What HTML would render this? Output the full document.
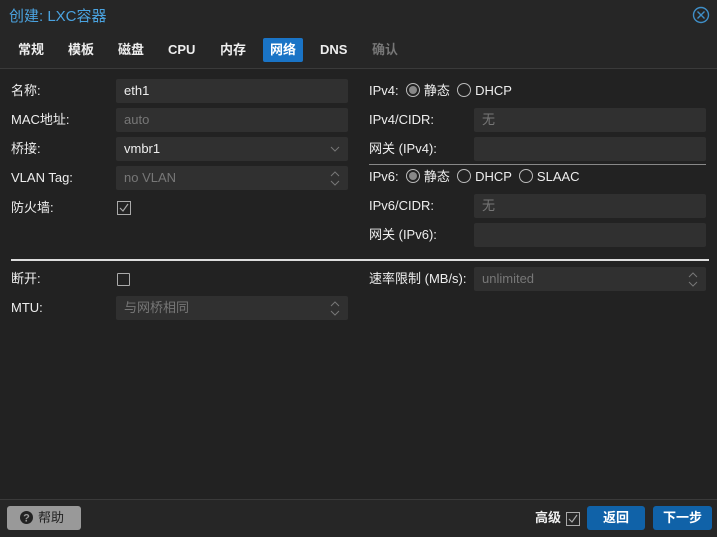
<!DOCTYPE html><html><head><meta charset="utf-8"><style>
*{margin:0;padding:0;box-sizing:border-box}
body{width:717px;height:537px;background:#262626;font-family:"Liberation Sans","Noto Sans CJK SC",sans-serif;font-size:13px;color:#e8e8e8;position:relative;overflow:hidden}
.a{position:absolute;white-space:nowrap}
.t{top:38px;height:24px;line-height:24px;font-weight:bold;color:#eee}
.in{position:absolute;height:24px;background:#303030;border-radius:2px;line-height:24px;padding-left:8px;color:#777}
.in.w{color:#eee}
.lb{position:absolute;line-height:24px;color:#eee}
.cb{position:absolute;width:13px;height:13px;border:1px solid #aaa;border-radius:1px}
.rd{display:inline-block;width:14px;height:14px;border:1px solid #bbb;border-radius:50%;vertical-align:-2px;margin-right:4px;position:relative}
.rd.on::after{content:"";position:absolute;left:2px;top:2px;width:8px;height:8px;border-radius:50%;background:#888}
.arr{position:absolute;right:8px;top:5px}
</style></head><body>
<div class="a" style="left:9px;top:5px;font-size:15px;color:#4aa3e0">创建: LXC容器</div>
<svg class="a" style="left:692px;top:6px" width="18" height="18"><circle cx="9" cy="9" r="7.5" fill="none" stroke="#3f8fc8" stroke-width="1.4"/><path d="M5.5 5.5L12.5 12.5M12.5 5.5L5.5 12.5" stroke="#3f8fc8" stroke-width="1.4"/></svg>
<div class="a t" style="left:18px">常规</div>
<div class="a t" style="left:68px">模板</div>
<div class="a t" style="left:118px">磁盘</div>
<div class="a t" style="left:168px">CPU</div>
<div class="a t" style="left:220px">内存</div>
<div class="a t" style="left:263px;width:40px;text-align:center;background:#1a74c6;border-radius:2px;color:#fff">网络</div>
<div class="a t" style="left:320px">DNS</div>
<div class="a t" style="left:372px;color:#777">确认</div>
<div class="a" style="left:0;top:68px;width:717px;height:432px;background:#222;border-top:1px solid #3a3a3a;border-bottom:1px solid #3a3a3a"></div>

<div class="lb" style="left:11px;top:79px">名称:</div><div class="in w" style="left:116px;top:79px;width:232px">eth1</div>
<div class="lb" style="left:11px;top:108px">MAC地址:</div><div class="in" style="left:116px;top:108px;width:232px">auto</div>
<div class="lb" style="left:11px;top:137px">桥接:</div><div class="in w" style="left:116px;top:137px;width:232px">vmbr1<svg class="arr" style="top:9px" width="10" height="6"><path d="M1 1L5 5L9 1" fill="none" stroke="#777"/></svg></div>
<div class="lb" style="left:11px;top:166px">VLAN Tag:</div><div class="in" style="left:116px;top:166px;width:232px">no VLAN<svg class="arr" width="10" height="15"><path d="M1 5L5 1L9 5M1 10L5 14L9 10" fill="none" stroke="#777"/></svg></div>
<div class="lb" style="left:11px;top:196px">防火墙:</div><svg class="a" style="left:117px;top:201px" width="14" height="14"><rect x="0.5" y="0.5" width="13" height="13" fill="none" stroke="#aaa"/><path d="M3 7L6 10L11 3" fill="none" stroke="#aaa" stroke-width="1.2"/></svg>
<div class="a" style="left:11px;top:259px;width:698px;height:2px;background:#ddd"></div>
<div class="lb" style="left:11px;top:267px">断开:</div><div class="cb" style="left:117px;top:273px"></div>
<div class="lb" style="left:11px;top:296px">MTU:</div><div class="in" style="left:116px;top:296px;width:232px">与网桥相同<svg class="arr" width="10" height="15"><path d="M1 5L5 1L9 5M1 10L5 14L9 10" fill="none" stroke="#777"/></svg></div>

<div class="lb" style="left:369px;top:79px">IPv4: &nbsp;<span class="rd on"></span>静态 &nbsp;<span class="rd"></span>DHCP</div>
<div class="lb" style="left:369px;top:108px">IPv4/CIDR:</div><div class="in" style="left:474px;top:108px;width:232px">无</div>
<div class="lb" style="left:369px;top:137px">网关 (IPv4):</div><div class="in" style="left:474px;top:137px;width:232px"></div>
<div class="a" style="left:369px;top:164px;width:337px;height:1px;background:#888"></div>
<div class="lb" style="left:369px;top:165px">IPv6: &nbsp;<span class="rd on"></span>静态 &nbsp;<span class="rd"></span>DHCP &nbsp;<span class="rd"></span>SLAAC</div>
<div class="lb" style="left:369px;top:194px">IPv6/CIDR:</div><div class="in" style="left:474px;top:194px;width:232px">无</div>
<div class="lb" style="left:369px;top:223px">网关 (IPv6):</div><div class="in" style="left:474px;top:223px;width:232px"></div>
<div class="lb" style="left:369px;top:267px">速率限制 (MB/s):</div><div class="in" style="left:474px;top:267px;width:232px">unlimited<svg class="arr" width="10" height="15"><path d="M1 5L5 1L9 5M1 10L5 14L9 10" fill="none" stroke="#777"/></svg></div>

<div class="a" style="left:7px;top:506px;width:74px;height:24px;background:#999;border-radius:3px;color:#222;line-height:24px;padding-left:13px"><svg style="vertical-align:-2px;margin-right:5px" width="13" height="13"><circle cx="6.5" cy="6.5" r="6.5" fill="#222"/><text x="6.5" y="10.5" font-size="11" font-weight="bold" fill="#999" text-anchor="middle" font-family="Liberation Sans">?</text></svg>帮助</div>
<div class="lb" style="left:535px;top:506px;font-weight:bold">高级</div><svg class="a" style="left:566px;top:512px" width="14" height="14"><rect x="0.5" y="0.5" width="13" height="13" fill="none" stroke="#aaa"/><path d="M3 7L6 10L11 3" fill="none" stroke="#aaa" stroke-width="1.2"/></svg>
<div class="a" style="left:587px;top:506px;width:58px;height:24px;background:#1062a8;border-radius:3px;color:#fff;line-height:24px;text-align:center;font-weight:bold">返回</div>
<div class="a" style="left:653px;top:506px;width:59px;height:24px;background:#1062a8;border-radius:3px;color:#fff;line-height:24px;text-align:center;font-weight:bold">下一步</div>
</body></html>
